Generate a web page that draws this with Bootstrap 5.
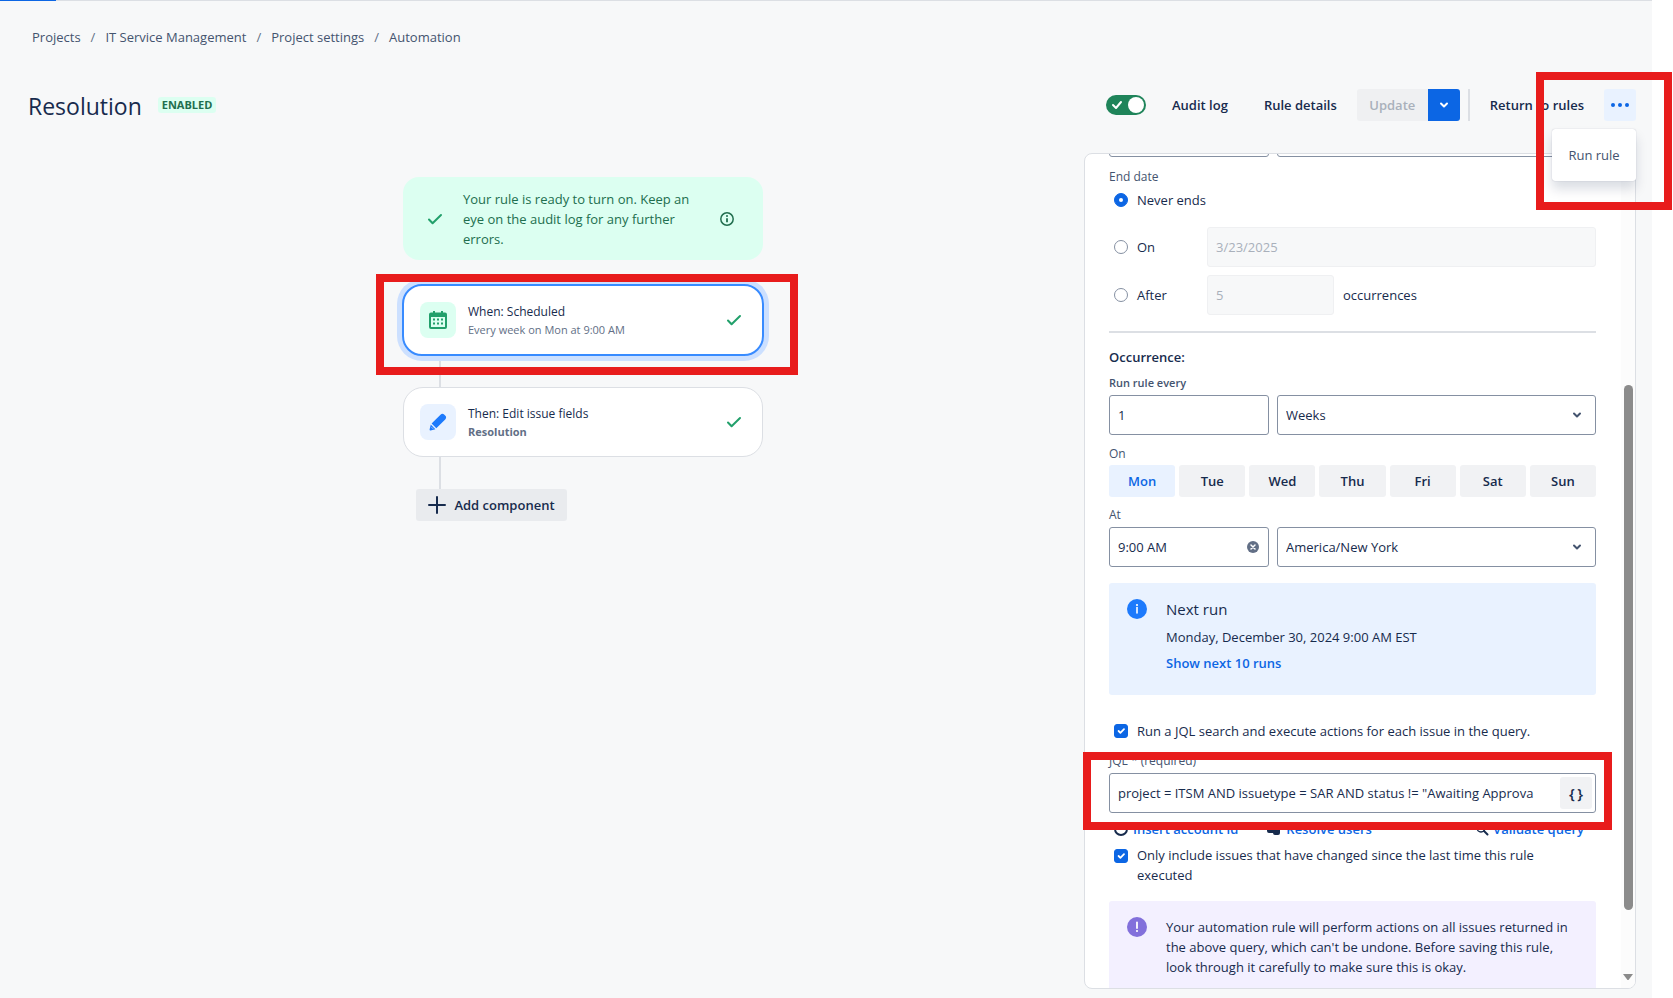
<!DOCTYPE html>
<html lang="en">
<head>
<meta charset="utf-8">
<meta name="viewport" content="width=device-width, initial-scale=1">
<title>Resolution - Automation</title>
<link href="https://cdn.jsdelivr.net/npm/bootstrap@5.3.0/dist/css/bootstrap.min.css" rel="stylesheet">
<style>
:root{--ink:#172b4d;--sub:#44546f;--line:#dcdfe4;--field:#8590a2;--brand:#0c66e4;--red:#e81c1c}
body{font-family:"Open Sans","Noto Sans",sans-serif;font-size:13px;line-height:20px;color:var(--ink);background:#fff}
svg{display:block;flex:none}
.app{background:#f7f8f9;margin-right:21px;border-top:1px solid var(--line)}
.load-bar{position:absolute;top:-1px;left:0;width:56px;height:1px;background:var(--brand)}
.crumbs{padding:26px 32px 0;--bs-breadcrumb-item-padding-x:10px;--bs-breadcrumb-divider-color:#626f86}
.crumbs a{color:var(--sub);text-decoration:none}
.page-head{padding:41px 16px 0 28px}
.page-title{font-size:23px;line-height:32px;padding-top:2px;font-weight:500;color:var(--ink)}
.lozenge{background:#dcfff1;color:#216e4e;font-size:11px;line-height:16px;font-weight:700;padding:0 4px;border-radius:3px}
.btn{--bs-btn-font-size:13px;--bs-btn-line-height:20px;--bs-btn-padding-y:6px;--bs-btn-border-width:0;--bs-btn-border-radius:3px;--bs-btn-color:var(--ink);--bs-btn-font-weight:600}
.plain-btn{--bs-btn-padding-x:16px}
.toggle{appearance:none;width:40px;height:20px;border-radius:10px;margin:0 10px 0 0;background:#1f845a url("data:image/svg+xml,%3Csvg xmlns='http://www.w3.org/2000/svg' viewBox='0 0 40 20'%3E%3Ccircle cx='30' cy='10' r='8' fill='white'/%3E%3Cpath d='M7 10l3 3 5-6' fill='none' stroke='white' stroke-width='2' stroke-linecap='round' stroke-linejoin='round'/%3E%3C/svg%3E")}
.update-btn:disabled{width:71px;background:#eff0f2;color:#a9b0bb;opacity:1;border-radius:3px 0 0 3px;padding-inline:0}
.drop-btn{width:32px;height:32px;background:var(--brand);border-radius:0 3px 3px 0;padding:0}
.rule-sep{width:2px;height:32px;background:var(--line)}
.more-btn,.more-btn:hover{width:32px;height:32px;padding:0;background:#e9f2ff}
.run-menu{position:absolute;top:40px;right:0;width:84px;padding:16px 0;background:#fff;border-radius:3px;box-shadow:0 8px 12px rgba(9,30,66,.15),0 0 1px rgba(9,30,66,.31);text-align:center;z-index:5}
.run-menu a{color:var(--sub);text-decoration:none}
.callout-box{position:absolute;border:8px solid var(--red);pointer-events:none;z-index:3}
.callout-menu{top:-17px;right:-36px;width:136px;height:138px;z-index:4}
.callout-card{inset:-10px -35px -19px -27px}
.callout-jql{top:599px;left:-1px;right:24px;height:78px}
.flow-area{padding:55px 0 0 82px}
.flow{width:360px}
.ready{background:#dcfff1;color:#216e4e;border-radius:16px;padding:12px 29px 11px 24px}
.ready p{width:232px}
.node{background:#fff;border:1px solid var(--line);border-radius:20px;height:70px;padding:0 20px 0 16px}
.node.chosen{height:72px;margin:0 -1px;border:2px solid #388bff;box-shadow:0 0 0 5px #cce0ff}
.tile{width:36px;height:36px;border-radius:8px}
.node-name{font-size:12px}
.node small{font-size:11px;line-height:16px;color:#626f86}
.wire{width:2px;background:var(--line);margin-left:36px}
.add-btn,.add-btn:hover{background:#e9ebee;margin-left:13px;width:151px;--bs-btn-padding-x:8px}
.side{width:552px;padding:31px 0 9px}
.panel{border:1px solid var(--line);border-radius:8px;background:#fff}
.panel-body{padding:0 25px 0 24px}
.panel-body>:first-child{margin-top:-37px}
.scroll-track{width:14px;background:#fcfcfc;padding-top:231px}
.scroll-thumb{width:9px;height:525px;border-radius:5px;background:#8b8b8b}
.lbl{display:block;font-size:11px;line-height:16px;font-weight:600;color:var(--sub)}
.lbl.thin{font-weight:400;font-size:12px}
.lbl-days{margin:11px 0 3px}
.lbl-time{margin:10px 0 4px}
.fld,.fld:focus,.form-select{height:40px;border:1px solid var(--field);border-radius:3px;font-size:13px;line-height:20px;color:var(--ink);padding:0 8px;background-color:#fff;box-shadow:none}
.form-select{background-size:10px;background-position:right 13px center;background-image:url("data:image/svg+xml,%3Csvg xmlns='http://www.w3.org/2000/svg' viewBox='0 0 10 10'%3E%3Cpath d='M2 3.5l3 3 3-3' fill='none' stroke='%2344546f' stroke-width='2' stroke-linecap='round' stroke-linejoin='round'/%3E%3C/svg%3E")}
.short{width:160px;flex:none}
.fld:disabled{background:#f7f8f9;border-color:#eff0f2;color:#a9b0bb}
.form-check-input{width:14px;height:14px;margin:0;flex:none;border-color:var(--field);box-shadow:none}
.form-check-input:checked{background-color:var(--brand);border-color:var(--brand)}
.form-check-input[type=checkbox]{border-radius:3px}
.form-check-input:checked[type=radio]{background-image:url("data:image/svg+xml,%3Csvg xmlns='http://www.w3.org/2000/svg' viewBox='0 0 12 12'%3E%3Ccircle cx='6' cy='6' r='2' fill='white'/%3E%3C/svg%3E")}
.opt{padding-left:5px;gap:9px}
.opt-name{width:61px;flex:none}
.opt-first{margin:5px 0 17px}
.opt-jql{margin:26px 0 12px}
.opt-changed{margin:6px 0 16px}
.opt-changed label{padding-right:48px}
.rule-line{height:2px;background:var(--line);margin:16px 0 14px}
.day{flex:1 1 0;--bs-btn-padding-x:0}
.day,.day:hover{background:#f1f2f4}
.day.picked{background:#e9f2ff;color:var(--brand)}
.braces{width:32px;--bs-btn-font-size:15px}
.msg{border-radius:3px;padding:16px 18px 0;gap:19px}
.msg-info{background:#e9f2ff;height:112px}
.msg-warn{background:#f3f0ff;height:140px}
.msg h3{font-size:15px;line-height:20px;font-weight:500}
.run-date{margin-bottom:6px}
.act{color:var(--brand);font-weight:600;text-decoration:none}
.jql-links{margin-top:6px}
</style>
<script src="https://cdn.jsdelivr.net/npm/bootstrap@5.3.0/dist/js/bootstrap.bundle.min.js"></script>
</head>
<body>
<div class="app vh-100 d-flex flex-column position-relative">
  <div class="load-bar"></div>
  <nav aria-label="breadcrumb">
    <ol class="breadcrumb crumbs mb-0">
      <li class="breadcrumb-item"><a href="#">Projects</a></li>
      <li class="breadcrumb-item"><a href="#">IT Service Management</a></li>
      <li class="breadcrumb-item"><a href="#">Project settings</a></li>
      <li class="breadcrumb-item"><a href="#">Automation</a></li>
    </ol>
  </nav>
  <header class="page-head d-flex align-items-center justify-content-between">
    <div class="d-flex align-items-center gap-3">
      <h1 class="page-title mb-0">Resolution</h1>
      <span class="lozenge">ENABLED</span>
    </div>
    <div class="d-flex align-items-center position-relative">
      <input class="toggle" type="checkbox" role="switch" aria-label="Rule enabled" checked>
      <button class="btn plain-btn me-1" type="button">Audit log</button>
      <button class="btn plain-btn" type="button">Rule details</button>
      <button class="btn update-btn ms-1" type="button" disabled>Update</button>
      <button class="btn drop-btn d-flex align-items-center justify-content-center" type="button" aria-label="More update options">
        <svg width="10" height="10" viewBox="0 0 10 10"><path d="M2 3.5l3 3 3-3" fill="none" stroke="#fff" stroke-width="2" stroke-linecap="round" stroke-linejoin="round"/></svg>
      </button>
      <span class="rule-sep ms-2 me-1"></span>
      <button class="btn plain-btn me-1" type="button">Return to rules</button>
      <button class="btn more-btn d-flex align-items-center justify-content-center" type="button" aria-label="More actions">
        <svg width="20" height="6" viewBox="0 0 20 6" fill="#0c66e4"><circle cx="3" cy="3" r="2"/><circle cx="10" cy="3" r="2"/><circle cx="17" cy="3" r="2"/></svg>
      </button>
      <div class="run-menu"><a href="#">Run rule</a></div>
      <div class="callout-box callout-menu"></div>
    </div>
  </header>

  <main class="d-flex flex-grow-1 overflow-hidden">
    <section class="flow-area flex-grow-1 d-flex justify-content-center align-items-start">
      <div class="flow">
        <div class="ready d-flex align-items-center mb-4">
          <svg width="16" height="16" viewBox="0 0 16 16"><path d="M2 8.500l3.600 3.800 8.400-8.300" fill="none" stroke="#22a06b" stroke-width="2" stroke-linecap="round" stroke-linejoin="round"/></svg>
          <p class="mb-0 ms-3 ps-1 me-auto">Your rule is ready to turn on. Keep an eye on the audit log for any further errors.</p>
          <svg width="14" height="14" viewBox="0 0 14 14"><circle cx="7" cy="7" r="6.200" fill="none" stroke="#216e4e" stroke-width="1.500"/><path d="M7 6.300v4" stroke="#216e4e" stroke-width="1.800"/><circle cx="7" cy="4" r="1" fill="#216e4e"/></svg>
        </div>
        <div class="position-relative">
          <article class="node chosen d-flex align-items-center">
            <div class="tile me-2 d-flex align-items-center justify-content-center" style="background:#dcfff1">
              <svg width="18" height="18" viewBox="0 0 18 18"><path d="M2 1.500h2V0h2v1.500h6V0h2v1.500h2a2 2 0 0 1 2 2V16a2 2 0 0 1-2 2H2a2 2 0 0 1-2-2V3.500a2 2 0 0 1 2-2z" fill="#22a06b"/><path d="M2 6h14v10H2z" fill="#dcfff1"/><path d="M4 7.500h2v2H4zm4 0h2v2H8zm4 0h2v2h-2zm-8 4h2v2H4zm4 0h2v2H8zm4 0h2v2h-2z" fill="#22a06b"/></svg>
            </div>
            <div class="ms-1 me-auto d-flex flex-column"><span class="node-name">When: Scheduled</span><small>Every week on Mon at 9:00 AM</small></div>
            <svg width="16" height="16" viewBox="0 0 16 16"><path d="M2 8.500l3.600 3.800 8.400-8.300" fill="none" stroke="#22a06b" stroke-width="2" stroke-linecap="round" stroke-linejoin="round"/></svg>
          </article>
          <div class="callout-box callout-card"></div>
        </div>
        <div class="wire" style="height:31px"></div>
        <article class="node d-flex align-items-center">
          <div class="tile me-2 d-flex align-items-center justify-content-center" style="background:#e9f2ff">
            <svg width="20" height="20" viewBox="0 0 20 20" fill="#1d7afc"><path d="M12.500 2.700c1.200-1.200 2.500-1.200 3.600-.2l1.300 1.300c1 1.100 1 2.400-.2 3.600l-8.900 8.900-4.700-4.700z"/><path d="M2.800 12.600l4.600 4.600-4.900 1.300c-.6.100-1-.3-.9-.9z"/><path d="M3.600 15.300l1.300 1.300" stroke="#e9f2ff" stroke-width=".800"/></svg>
          </div>
          <div class="ms-1 me-auto d-flex flex-column"><span class="node-name">Then: Edit issue fields</span><small class="fw-bold">Resolution</small></div>
          <svg width="16" height="16" viewBox="0 0 16 16"><path d="M2 8.500l3.600 3.800 8.400-8.300" fill="none" stroke="#22a06b" stroke-width="2" stroke-linecap="round" stroke-linejoin="round"/></svg>
        </article>
        <div class="wire" style="height:32px"></div>
        <button class="btn add-btn d-flex align-items-center justify-content-center gap-2" type="button">
          <svg width="18" height="18" viewBox="0 0 18 18"><path d="M9 1v16M1 9h16" stroke="#172b4d" stroke-width="2" stroke-linecap="round"/></svg>Add component
        </button>
      </div>
    </section>

    <aside class="side flex-shrink-0 me-3">
      <div class="position-relative h-100">
      <div class="panel h-100 d-flex overflow-hidden">
        <form class="panel-body flex-grow-1">
          <div class="d-flex gap-2">
            <input class="form-control fld short" type="text" aria-label="Start time">
            <input class="form-control fld" type="text" aria-label="Start time zone">
          </div>
          <span class="lbl thin mt-2 pt-1">End date</span>
          <div class="d-flex align-items-center opt opt-first">
            <input class="form-check-input" type="radio" name="end" id="never" checked><label for="never">Never ends</label>
          </div>
          <div class="d-flex align-items-center opt mb-2">
            <input class="form-check-input" type="radio" name="end" id="onDate"><label class="opt-name" for="onDate">On</label>
            <input class="form-control fld" type="text" value="3/23/2025" aria-label="End on date" disabled>
          </div>
          <div class="d-flex align-items-center opt">
            <input class="form-check-input" type="radio" name="end" id="after"><label class="opt-name" for="after">After</label>
            <input class="form-control fld" style="width:127px" type="text" value="5" aria-label="Number of occurrences" disabled><span>occurrences</span>
          </div>
          <div class="rule-line"></div>
          <div class="fw-semibold">Occurrence:</div>
          <label class="lbl mt-2 mb-1" for="every">Run rule every</label>
          <div class="d-flex gap-2">
            <input class="form-control fld short" id="every" type="text" value="1">
            <select class="form-select" aria-label="Interval"><option>Weeks</option></select>
          </div>
          <span class="lbl thin lbl-days">On</span>
          <div class="d-flex gap-1">
            <button class="btn day picked" type="button">Mon</button><button class="btn day" type="button">Tue</button><button class="btn day" type="button">Wed</button><button class="btn day" type="button">Thu</button><button class="btn day" type="button">Fri</button><button class="btn day" type="button">Sat</button><button class="btn day" type="button">Sun</button>
          </div>
          <label class="lbl thin lbl-time" for="at">At</label>
          <div class="d-flex gap-2">
            <div class="short position-relative">
              <input class="form-control fld" id="at" type="text" value="9:00 AM">
              <svg class="position-absolute top-50 end-0 translate-middle-y me-2" width="16" height="16" viewBox="0 0 16 16"><circle cx="8" cy="8" r="6" fill="#626f86"/><path d="M6 6l4 4m0-4l-4 4" stroke="#fff" stroke-width="1.500" stroke-linecap="round"/></svg>
            </div>
            <select class="form-select" aria-label="Time zone"><option>America/New York</option></select>
          </div>
          <div class="msg msg-info d-flex mt-3">
            <svg width="20" height="20" viewBox="0 0 20 20"><circle cx="10" cy="10" r="10" fill="#1d7afc"/><circle cx="10" cy="6" r="1.100" fill="#fff"/><path d="M10 8.500V14" stroke="#fff" stroke-width="1.600" stroke-linecap="round"/></svg>
            <div>
              <h3 class="mb-2">Next run</h3>
              <div class="run-date">Monday, December 30, 2024 9:00 AM EST</div>
              <a class="act" href="#">Show next 10 runs</a>
            </div>
          </div>
          <div class="d-flex align-items-center opt opt-jql">
            <input class="form-check-input" type="checkbox" id="runJql" checked><label for="runJql">Run a JQL search and execute actions for each issue in the query.</label>
          </div>
          <label class="lbl thin mb-1" for="jql">JQL * (required)</label>
          <div class="position-relative">
            <input class="form-control fld" id="jql" type="text" value="project = ITSM AND issuetype = SAR AND status != &quot;Awaiting Approva">
            <button class="btn day braces position-absolute top-50 end-0 translate-middle-y me-1" type="button" aria-label="Smart values">{&thinsp;}</button>
          </div>
          <div class="d-flex align-items-center gap-1 jql-links ps-1">
            <svg width="16" height="16" viewBox="0 0 16 16"><circle cx="8" cy="8" r="6" fill="none" stroke="#172b4d" stroke-width="2"/></svg>
            <a class="act me-4" href="#">Insert account id</a>
            <svg width="16" height="16" viewBox="0 0 16 16" fill="#172b4d"><circle cx="5" cy="4" r="3"/><circle cx="11" cy="6" r="3"/><path d="M1 8h6v4H3a2 2 0 0 1-2-2zm6 0h7v4a2 2 0 0 1-2 2H9a2 2 0 0 1-2-2z"/></svg>
            <a class="act me-auto" href="#">Resolve users</a>
            <svg width="14" height="14" viewBox="0 0 14 14"><path d="M9 9l3.500 3.500" stroke="#172b4d" stroke-width="2" stroke-linecap="round"/><circle cx="6" cy="6" r="4" fill="none" stroke="#172b4d" stroke-width="1.500"/></svg>
            <a class="act me-2 pe-1" href="#">Validate query</a>
          </div>
          <div class="d-flex opt opt-changed">
            <input class="form-check-input mt-1" type="checkbox" id="changed" checked><label for="changed">Only include issues that have changed since the last time this rule executed</label>
          </div>
          <div class="msg msg-warn d-flex">
            <svg width="20" height="20" viewBox="0 0 20 20"><circle cx="10" cy="10" r="10" fill="#8270db"/><circle cx="10" cy="14" r="1.100" fill="#fff"/><path d="M10 5.500V11" stroke="#fff" stroke-width="1.800" stroke-linecap="round"/></svg>
            <p class="mb-0">Your automation rule will perform actions on all issues returned in the above query, which can't be undone. Before saving this rule, look through it carefully to make sure this is okay.</p>
          </div>
        </form>
        <div class="scroll-track d-flex flex-column align-items-center flex-shrink-0">
          <div class="scroll-thumb flex-shrink-0"></div>
          <svg class="mt-auto mb-2" width="10" height="6" viewBox="0 0 10 6"><path d="M0 0h10L5.500 6h-1z" fill="#8b8b8b"/></svg>
        </div>
      </div>
      <div class="callout-box callout-jql"></div>
      </div>
    </aside>
  </main>
</div>
</body>
</html>
